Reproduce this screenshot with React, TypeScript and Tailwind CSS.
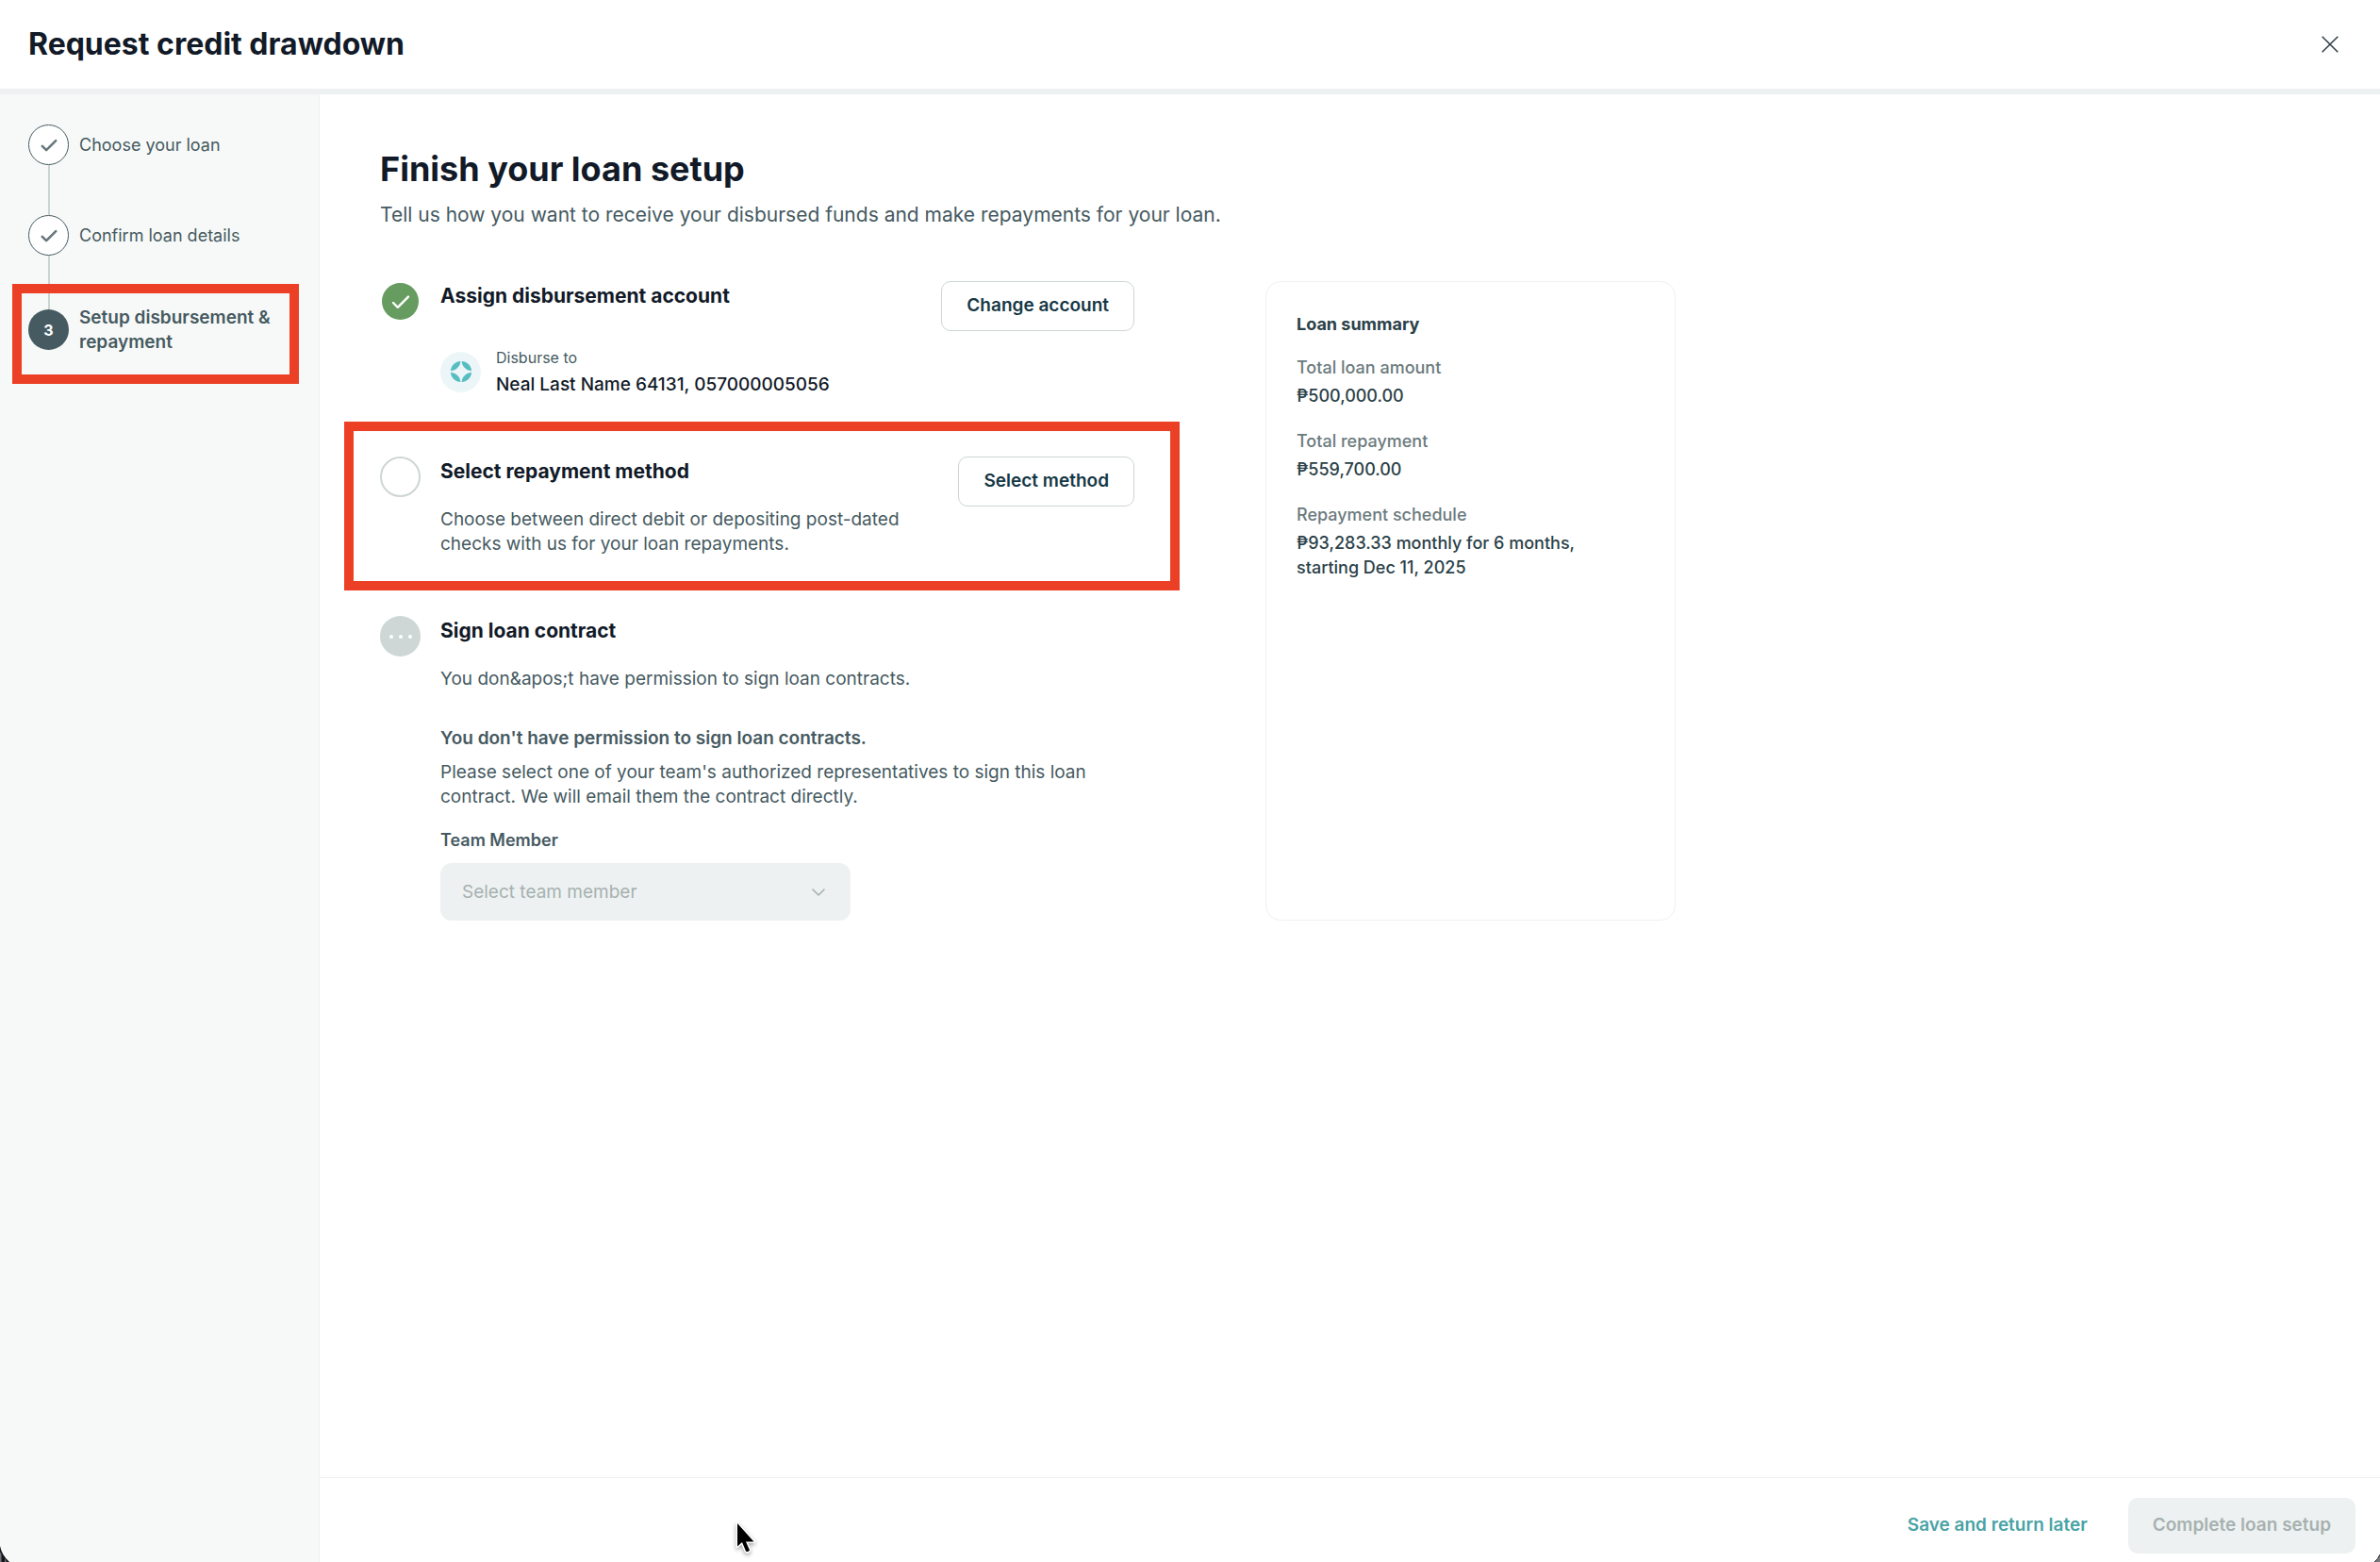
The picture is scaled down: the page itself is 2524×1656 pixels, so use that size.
import React, { useState } from 'react'

const loanSteps = [
    { label: 'Choose your loan', done: true, connector: 'h-[53px]' },
    { label: 'Confirm loan details', done: true, connector: 'h-[57px]' },
    { label: 'Setup disbursement & repayment', done: false, connector: '' },
]

const summary = [
    { label: 'Total loan amount', value: '₱500,000.00' },
    { label: 'Total repayment', value: '₱559,700.00' },
    { label: 'Repayment schedule', value: '₱93,283.33 monthly for 6 months, starting Dec 11, 2025' },
]

function Check({ className }: { className: string }) {
    return (
        <svg viewBox="0 0 20 20" fill="none" stroke="currentColor" strokeLinecap="round" strokeLinejoin="round" className={className} aria-hidden="true">
            <path d="M2 11l4.8 4.8L18 4.6" />
        </svg>
    )
}

function Highlight({ className }: { className: string }) {
    return <div className={`absolute border-10 border-[#eb4025] pointer-events-none ${className}`} />
}

function OutlineButton({ children }: { children: React.ReactNode }) {
    return (
        <button type="button" className="h-[53px] shrink-0 rounded-[10px] border border-[#cdd5d4] bg-white px-[26px] text-[19px] font-semibold text-[#153845]">
            {children}
        </button>
    )
}

function Sidebar() {
    return (
        <aside className="w-[339px] shrink-0 border-r border-[#edf1f2] bg-[#f7f9f8] pt-8 pl-[30px]">
            <ol className="relative">
                {loanSteps.map((step, i) => (
                    <li key={step.label}>
                        <div className="flex h-[43px] items-center gap-[11px]">
                            {step.done ? (
                                <span className="flex size-[43px] shrink-0 items-center justify-center rounded-full border border-[#465a61] bg-white text-[#66777b]">
                                    <Check className="size-[18px] stroke-[2.8]" />
                                </span>
                            ) : (
                                <span className="flex size-[43px] shrink-0 items-center justify-center rounded-full bg-[#465a61] text-base font-bold text-white">
                                    {i + 1}
                                </span>
                            )}
                            <span className={`w-[220px] leading-[26px] text-[#465a61] ${step.done ? 'text-lg' : 'text-[19px] font-semibold'}`}>{step.label}</span>
                        </div>
                        <div className={`ml-[21px] w-[2px] bg-[#cbd4d3] ${step.connector}`} />
                    </li>
                ))}
                <Highlight className="-bottom-9 -left-[17px] h-[106px] w-[304px]" />
            </ol>
        </aside>
    )
}

function Disbursement() {
    return (
        <section className="flex gap-[21px]">
            <span className="flex size-[43px] shrink-0 items-center justify-center">
                <span className="flex size-[39px] items-center justify-center rounded-full bg-[#669c60] text-white">
                    <Check className="size-5 stroke-[2.4]" />
                </span>
            </span>
            <div className="min-w-0 flex-1">
                <div className="flex items-start justify-between">
                    <h2 className="text-[21px] leading-8 font-bold">Assign disbursement account</h2>
                    <OutlineButton>Change account</OutlineButton>
                </div>
                <div className="mt-[14px] flex items-center gap-4">
                    <span className="flex size-[43px] items-center justify-center rounded-full bg-[#ecf6f8]">
                        <svg viewBox="0 0 22 22" fill="#56bdc1" className="size-[22px]" aria-hidden="true">
                            <path d="M10.3 0v.8C9.7 5.8 5.8 9.5 0 10.3 0 5 4.500 .3 10.3 0z" />
                            <path d="M11.7 0v.8C12.3 5.8 16.2 9.5 22 10.3 22 5 17.5 .3 11.7 0z" />
                            <path d="M10.3 22v-.8C9.7 16.2 5.8 12.5 0 11.7 0 17 4.500 21.7 10.3 22z" />
                            <path d="M11.7 22v-.8C12.3 16.2 16.2 12.5 22 11.7 22 17 17.5 21.7 11.7 22z" />
                        </svg>
                    </span>
                    <div>
                        <p className="text-base leading-7 text-[#465a61]">Disburse to</p>
                        <p className="text-[19px] leading-[30px] font-medium">Neal Last Name 64131, 057000005056</p>
                    </div>
                </div>
            </div>
        </section>
    )
}

function Repayment() {
    return (
        <section className="relative flex gap-[21px]">
            <Highlight className="-top-[37px] -left-[38px] h-[179px] w-[886px]" />
            <span className="size-[43px] shrink-0 rounded-full border-2 border-[#cfd6d6]" />
            <div className="flex min-w-0 flex-1 items-start justify-between">
                <div>
                    <h2 className="text-[21px] leading-8 font-bold">Select repayment method</h2>
                    <p className="mt-[22px] max-w-[520px] text-[19px] leading-[26px] text-[#465a61]">
                        Choose between direct debit or depositing post-dated checks with us for your loan repayments.
                    </p>
                </div>
                <OutlineButton>Select method</OutlineButton>
            </div>
        </section>
    )
}

function Contract() {
    const [member, setMember] = useState('')

    return (
        <section className="flex gap-[21px]">
            <span className="flex size-[43px] shrink-0 items-center justify-center gap-[6px] rounded-full bg-[#cfd6d6]">
                <i className="size-1 rounded-full bg-white" />
                <i className="size-1 rounded-full bg-white" />
                <i className="size-1 rounded-full bg-white" />
            </span>
            <div className="text-[19px] leading-[26px] text-[#465a61]">
                <h2 className="text-[21px] leading-8 font-bold text-[#121a28]">Sign loan contract</h2>
                <p className="mt-[22px]">You don&amp;apos;t have permission to sign loan contracts.</p>
                <p className="mt-[37px] font-semibold">You don't have permission to sign loan contracts.</p>
                <p className="mt-[10px] max-w-[690px]">
                    Please select one of your team's authorized representatives to sign this loan contract. We will email them the contract directly.
                </p>
                <label htmlFor="team-member" className="mt-5 block text-lg leading-[26px] font-semibold">Team Member</label>
                <div className="relative mt-[11px] w-[435px]">
                    <select
                        id="team-member"
                        disabled
                        value={member}
                        onChange={(e) => setMember(e.target.value)}
                        className="block h-[61px] w-full appearance-none rounded-xl bg-[#edf1f2] pr-12 pl-[23px] text-[19px] font-normal text-[#a7b1b0] opacity-100"
                    >
                        <option value="">Select team member</option>
                    </select>
                    <svg viewBox="0 0 14 8" fill="none" stroke="#a7b1b0" strokeWidth="1.6" strokeLinecap="round" strokeLinejoin="round" className="pointer-events-none absolute top-[27px] right-[27px] h-2 w-[14px]" aria-hidden="true">
                        <path d="M1 1l6 6 6-6" />
                    </svg>
                </div>
            </div>
        </section>
    )
}

function LoanSummary() {
    return (
        <aside className="w-[435px] shrink-0 rounded-2xl border border-[#eff1f1] p-8 text-lg leading-[26px] font-medium text-[#2b4148]">
            <h2 className="font-bold">Loan summary</h2>
            <dl className="mt-5 space-y-[22px]">
                {summary.map((row) => (
                    <div key={row.label}>
                        <dt className="text-[#6b7a7d]">{row.label}</dt>
                        <dd className="mt-1 max-w-[330px]">{row.value}</dd>
                    </div>
                ))}
            </dl>
        </aside>
    )
}

export default function App() {
    return (
        <div className="relative flex min-h-screen flex-col overflow-hidden bg-white font-['Inter',sans-serif] text-[#121a28]">
            <header className="flex h-[100px] shrink-0 items-center justify-between border-b-6 border-[#edf1f2] pr-11 pl-[30px]">
                <h1 className="text-[32px] leading-10 font-bold">Request credit drawdown</h1>
                <button type="button" aria-label="Close">
                    <svg viewBox="0 0 18 18" fill="none" stroke="#2b3d48" strokeWidth="1.5" className="size-[18px]" aria-hidden="true">
                        <path d="M.7.7l16.6 16.6M17.3.7L.7 17.3" />
                    </svg>
                </button>
            </header>

            <div className="flex flex-1">
                <Sidebar />
                <div className="flex min-w-0 flex-1 flex-col">
                    <main className="flex-1 px-16 pt-[53px]">
                        <h2 className="text-[36px] leading-[52px] font-bold">Finish your loan setup</h2>
                        <p className="mt-[9px] text-[21px] leading-7 text-[#465a61]">
                            Tell us how you want to receive your disbursed funds and make repayments for your loan.
                        </p>
                        <div className="mt-14 flex gap-[139px]">
                            <div className="flex w-[800px] flex-col">
                                <Disbursement />
                                <div className="h-[61px]" />
                                <Repayment />
                                <div className="h-[63px]" />
                                <Contract />
                            </div>
                            <LoanSummary />
                        </div>
                    </main>

                    <footer className="flex items-center justify-end gap-[17px] border-t border-[#edf1f2] pt-[21px] pr-[26px] pb-[9px]">
                        <button type="button" className="h-[59px] px-[26px] text-[19px] font-semibold text-[#4aa3a6]">Save and return later</button>
                        <button type="button" disabled className="h-[59px] rounded-[10px] bg-[#edf1f2] px-[26px] text-[19px] font-semibold text-[#a7b1b0]">Complete loan setup</button>
                    </footer>
                </div>
            </div>

            {/* Window corners */}
            <svg viewBox="0 0 10 17" className="pointer-events-none absolute bottom-0 left-0 h-[17px] w-[10px]" aria-hidden="true">
                <path d="M0 0Q2 10 10 17H0z" fill="#14151a" />
                <path d="M0 6v11h1.5V9zM5 13v4h2z" fill="#70757a" />
            </svg>
            <svg viewBox="0 0 6 8" className="pointer-events-none absolute right-0 bottom-0 h-2 w-[6px]" aria-hidden="true">
                <path d="M6 0Q4 5 0 8h6z" fill="#77797c" />
                <path d="M6 0Q4 5 0 8" fill="none" stroke="#2a2c30" />
            </svg>

            {/* Pointer */}
            <svg viewBox="0 0 28 40" className="pointer-events-none absolute bottom-[5px] left-[776px] h-10 w-7 drop-shadow-[0_2px_2px_rgba(0,0,0,0.35)]" aria-hidden="true">
                <path d="M6 4v24.5l5-4.5 4 9.5q2 1.5 4-1L15 23.5h8.5z" fill="#000" stroke="#fff" strokeWidth="3" strokeLinejoin="round" paintOrder="stroke" />
            </svg>
        </div>
    )
}
